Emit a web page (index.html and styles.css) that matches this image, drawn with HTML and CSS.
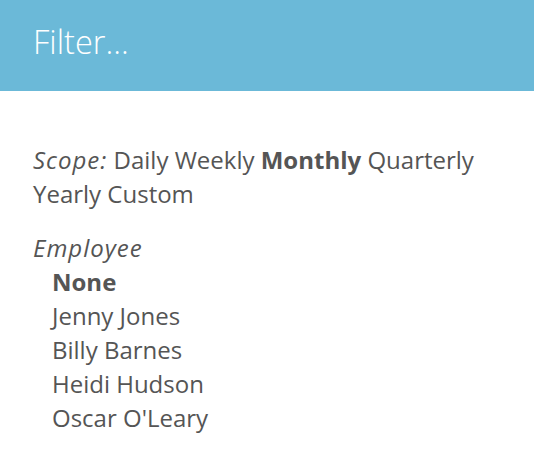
FILE: index.html
```html
<!DOCTYPE html>
<html>
<head>
<meta charset="utf-8">
<link rel="stylesheet" href="styles.css">
</head>
<body>
<header class="bar"><h1 class="title">Filter...</h1></header>
<main class="content">
  <p class="scope"><em>Scope:</em> Daily Weekly <strong>Monthly</strong> Quarterly Yearly Custom</p>
  <div class="group">
    <div class="label"><em>Employee</em></div>
    <ul class="list">
      <li><strong>None</strong></li>
      <li>Jenny Jones</li>
      <li>Billy Barnes</li>
      <li>Heidi Hudson</li>
      <li>Oscar O'Leary</li>
    </ul>
  </div>
</main>
</body>
</html>
```
FILE: styles.css
```css
html, body { margin: 0; padding: 0; background: #fff; }
body { font-family: "Open Sans", sans-serif; color: #555; }
.bar { background: #6bb9d8; height: 91px; box-sizing: border-box; display: flex; align-items: center; padding: 0 33px 6px; }
.title { margin: 0; font-weight: 300; font-size: 32.5px; color: #fff; line-height: 1; }
.content { padding: 0 33px; font-size: 24px; line-height: 34px; }
.content em { letter-spacing: 1px; }
.scope { margin: 52px 0 20px; }
.scope strong, .list strong { font-weight: 700; }
.list { list-style: none; margin: 0; padding: 0 0 0 19px; }
```
